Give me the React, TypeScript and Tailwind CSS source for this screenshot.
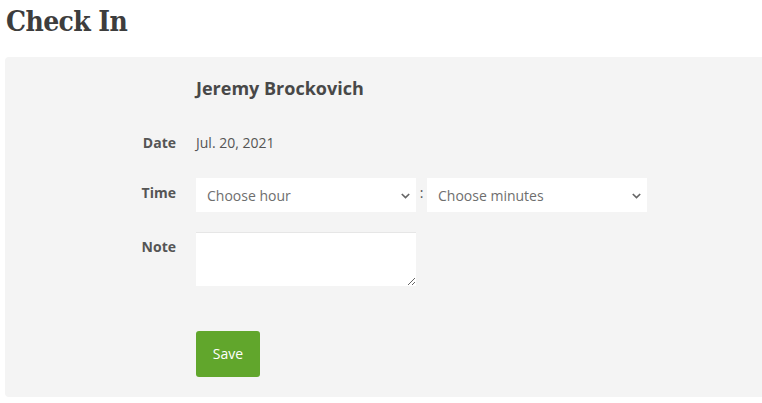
export default function App() {
  return (
    <div className="w-[762px] h-[403px] overflow-hidden bg-white text-[#555] font-['Open_Sans',sans-serif]">
      <h1 className="pl-[6px] pt-[2px] h-[57px] text-[28px] leading-[40px] font-bold tracking-[-0.6px] text-[#3d3d3d] font-['DejaVu_Serif_Condensed','DejaVu_Serif',serif]">
        Check In
      </h1>

      <div className="ml-[5px] w-[770px] rounded-[4px] bg-[#f4f4f4] pt-[19px] pb-[20px]">
        <div className="grid grid-cols-[171px_1fr] gap-x-[20px]">
          <div />
          <div className="h-[24px] text-[18px] leading-[24px] font-bold text-[#484848]">Jeremy Brockovich</div>

          <div className="mt-[33px] text-right text-[14px] leading-[20px] font-bold text-[#555]">Date</div>
          <div className="mt-[33px] text-[14px] leading-[20px] text-[#555]">Jul. 20, 2021</div>

          <div className="mt-[25px] pt-[5px] text-right text-[14px] leading-[20px] font-bold text-[#555]">Time</div>
          <div className="mt-[25px] flex items-center">
            <TimeSelect placeholder="Choose hour" />
            <span className="w-[11px] text-center text-[14px] leading-[20px] -mt-[4px] text-[#555]">:</span>
            <TimeSelect placeholder="Choose minutes" />
          </div>

          <div className="mt-[20px] pt-[5px] text-right text-[14px] leading-[20px] font-bold text-[#555]">Note</div>
          <div className="mt-[20px]">
            <textarea className="block w-[220px] h-[54px] bg-white border-0 border-t border-[#e6e6e6] outline-none px-[10px] py-[6px] text-[14px]" />
          </div>

          <div />
          <div className="mt-[45px]">
            <button className="w-[64px] h-[46px] rounded-[3px] bg-[#61a62c] text-white text-[14px] leading-[20px]">
              Save
            </button>
          </div>
        </div>
      </div>
    </div>
  );
}

function TimeSelect({ placeholder }: { placeholder: string }) {
  return (
    <div className="relative w-[220px] h-[34px]">
      <select
        defaultValue=""
        className="appearance-none w-full h-full bg-white border-0 outline-none pl-[11px] pr-[28px] text-[14px] text-[#6e6e6e] font-['Open_Sans',sans-serif]"
      >
        <option value="" disabled>
          {placeholder}
        </option>
      </select>
      <svg
        className="pointer-events-none absolute right-[6px] top-[15px]"
        width="9"
        height="6"
        viewBox="0 0 9 6"
        fill="none"
      >
        <path d="M0.8 1 L4.5 4.5 L8.2 1" stroke="#666" strokeWidth="1.7" />
      </svg>
    </div>
  );
}
